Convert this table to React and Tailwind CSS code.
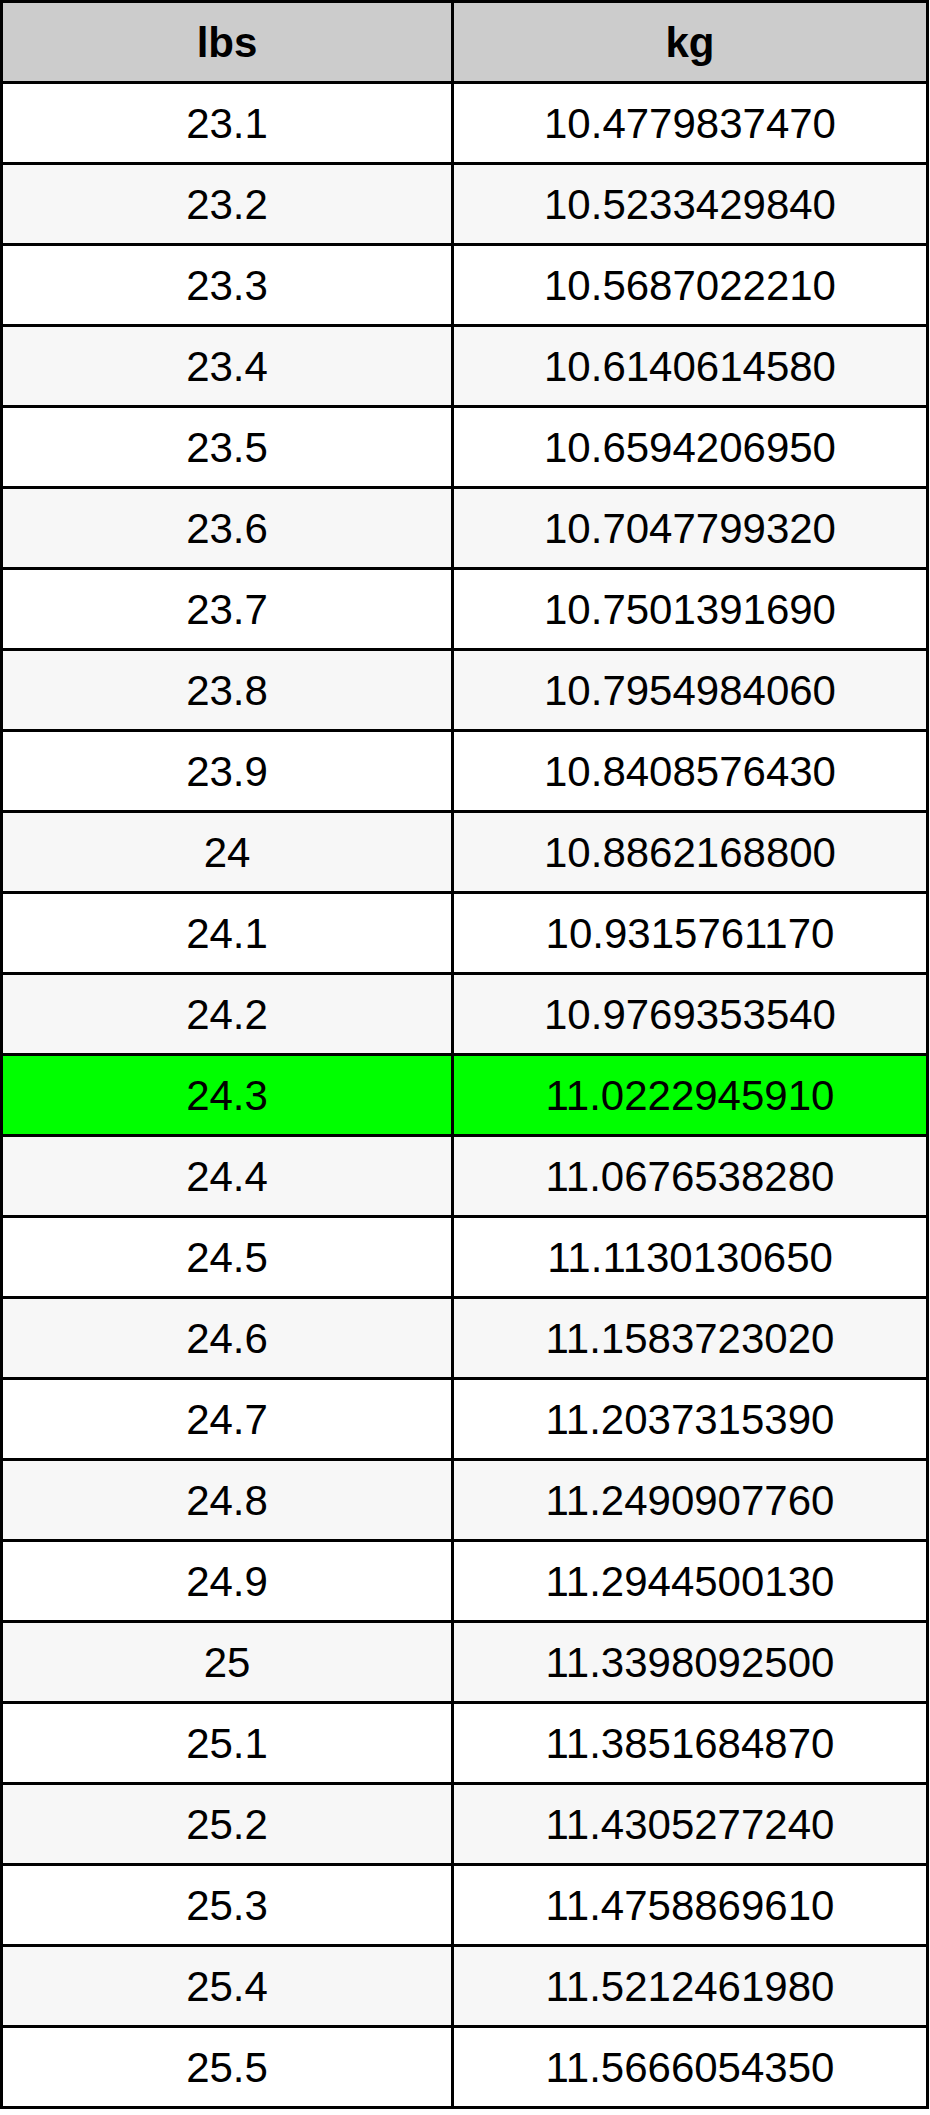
import React from "react";

const rows = [
  ["23.1", "10.4779837470"],
  ["23.2", "10.5233429840"],
  ["23.3", "10.5687022210"],
  ["23.4", "10.6140614580"],
  ["23.5", "10.6594206950"],
  ["23.6", "10.7047799320"],
  ["23.7", "10.7501391690"],
  ["23.8", "10.7954984060"],
  ["23.9", "10.8408576430"],
  ["24", "10.8862168800"],
  ["24.1", "10.9315761170"],
  ["24.2", "10.9769353540"],
  ["24.3", "11.0222945910"],
  ["24.4", "11.0676538280"],
  ["24.5", "11.1130130650"],
  ["24.6", "11.1583723020"],
  ["24.7", "11.2037315390"],
  ["24.8", "11.2490907760"],
  ["24.9", "11.2944500130"],
  ["25", "11.3398092500"],
  ["25.1", "11.3851684870"],
  ["25.2", "11.4305277240"],
  ["25.3", "11.4758869610"],
  ["25.4", "11.5212461980"],
  ["25.5", "11.5666054350"],
];

const cell = "h-[81px] flex items-center justify-center border-r-[3px] border-b-[3px] border-black";

export default function App() {
  return (
    <div className="bg-white w-[930px] min-h-[2115px] font-['Liberation_Sans',Arial,sans-serif] text-black text-[42px]">
      <div className="w-[929px] grid grid-cols-[451px_475px] border-l-[3px] border-t-[3px] border-black">
        <div className={`${cell} bg-[#cccccc] font-bold`}>lbs</div>
        <div className={`${cell} bg-[#cccccc] font-bold`}>kg</div>
        {rows.map(([lbs, kg], i) => {
          const bg = lbs === "24.3" ? "bg-[#00ff00]" : i % 2 === 1 ? "bg-[#f7f7f7]" : "bg-white";
          return (
            <React.Fragment key={lbs}>
              <div className={`${cell} ${bg}`}>{lbs}</div>
              <div className={`${cell} ${bg}`}>{kg}</div>
            </React.Fragment>
          );
        })}
      </div>
    </div>
  );
}
